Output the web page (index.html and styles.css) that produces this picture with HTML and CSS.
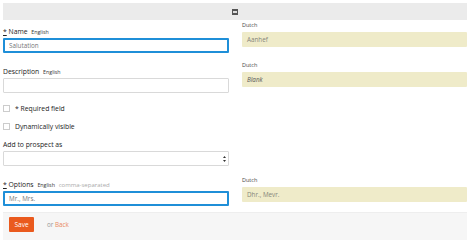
FILE: index.html
```html
<!DOCTYPE html>
<html lang="en">
<head>
    <meta charset="UTF-8">
    <title>Edit field</title>
    <link rel="stylesheet" href="styles.css">
</head>
<body>
    <div class="panel">
        <div class="panel-head">
            <span class="toggle"></span>
        </div>

        <div class="row">
            <div class="col-main">
                <label class="field-label"><span class="req">*</span> Name <span class="lang">English</span></label>
                <input type="text" class="text-input active" value="Salutation">
            </div>
            <div class="col-trans">
                <div class="trans-label">Dutch</div>
                <div class="trans-box">Aanhef</div>
            </div>
        </div>

        <div class="row">
            <div class="col-main">
                <label class="field-label">Description <span class="lang">English</span></label>
                <input type="text" class="text-input">
            </div>
            <div class="col-trans">
                <div class="trans-label">Dutch</div>
                <div class="trans-box empty">Blank</div>
            </div>
        </div>

        <div class="check first"><span class="box"></span>* Required field</div>
        <div class="check"><span class="box"></span>Dynamically visible</div>

        <div class="select-field">
            <label class="field-label">Add to prospect as</label>
            <div class="select-input">
                <svg width="3" height="6" viewBox="0 0 3 6"><path d="M1.5 0 L3 2 L0 2 Z M1.5 6 L3 4 L0 4 Z" fill="#333"/></svg>
            </div>
        </div>

        <div class="row options">
            <div class="col-main">
                <label class="field-label"><span class="req">*</span> Options <span class="lang">English</span> <span class="hint">comma-separated</span></label>
                <input type="text" class="text-input active" value="Mr., Mrs.">
            </div>
            <div class="col-trans">
                <div class="trans-label">Dutch</div>
                <div class="trans-box">Dhr., Mevr.</div>
            </div>
        </div>

        <div class="actions">
            <button class="btn-save">Save</button>
            <span class="or">or <a href="#" class="back">Back</a></span>
        </div>
    </div>
</body>
</html>
```

FILE: styles.css
```css
body {
    margin: 0;
    font-family: "Open Sans", sans-serif;
    color: #333;
    background-color: #fff;
}
.panel {
    width: 464px;
    padding: 3px 7px 0 3px;
}
.panel-head {
    height: 17px;
    background-color: #ebebeb;
    display: flex;
    align-items: center;
    justify-content: center;
}
.toggle {
    width: 6px;
    height: 6px;
    background-color: #555;
    position: relative;
}
.toggle::after {
    content: "";
    position: absolute;
    left: 1px;
    top: 2px;
    width: 4px;
    height: 2px;
    background-color: #ddd;
}
.row {
    display: flex;
    gap: 13px;
    margin-bottom: 7px;
}
.col-main {
    width: 226px;
    padding-top: 8px;
}
.col-trans {
    width: 225px;
}
.field-label {
    display: block;
    font-size: 6.8px;
    line-height: 8px;
    height: 8px;
    margin-bottom: 2px;
    color: #222;
}
.req {
    text-decoration: underline;
}
.lang {
    font-size: 5.3px;
    margin-left: 2px;
    color: #333;
}
.hint {
    font-size: 6px;
    color: #aaa;
    margin-left: 2px;
}
.text-input {
    display: block;
    box-sizing: border-box;
    width: 226px;
    height: 15px;
    padding: 0 5px;
    border: 1px solid #d9d9d9;
    border-radius: 1px;
    font-family: "Open Sans", sans-serif;
    font-size: 6.3px;
    color: #777;
    outline: none;
}
.text-input.active {
    border: 2px solid #1f8fd8;
    padding: 0 4px;
}
.trans-label {
    font-size: 5.5px;
    line-height: 10px;
    height: 10px;
    margin-bottom: 2px;
    color: #444;
}
.trans-box {
    height: 15px;
    line-height: 15px;
    background-color: #efebc9;
    padding: 0 5px;
    font-size: 6.3px;
    color: #85857a;
    border-radius: 1px;
}
.trans-box.empty {
    font-style: italic;
    color: #555;
}
.check {
    display: flex;
    align-items: center;
    font-size: 6.8px;
    height: 10px;
    margin-bottom: 8px;
    color: #222;
}
.check.first {
    margin-top: 10px;
}
.box {
    width: 5px;
    height: 5px;
    border: 1px solid #ccc;
    margin-right: 5px;
}
.select-field {
    margin-top: 10px;
    width: 226px;
}
.select-input {
    box-sizing: border-box;
    height: 15px;
    border: 1px solid #d9d9d9;
    border-radius: 1px;
    display: flex;
    align-items: center;
    justify-content: flex-end;
    padding-right: 2px;
}
.row.options {
    margin-top: 9px;
    margin-bottom: 0;
}
.row.options .col-main {
    padding-top: 6px;
}
.actions {
    margin-top: 6px;
    height: 32px;
    background-color: #f6f6f6;
    border-top: 1px solid #eee;
    display: flex;
    align-items: flex-start;
    padding-top: 4px;
    box-sizing: border-box;
    padding-left: 6px;
}
.btn-save {
    width: 25px;
    height: 15px;
    border: none;
    border-radius: 1px;
    background-color: #ea5a1e;
    color: #fff;
    font-family: "Open Sans", sans-serif;
    font-size: 6.5px;
    padding: 0;
}
.or {
    font-size: 6.3px;
    line-height: 15px;
    color: #999;
    margin-left: 13px;
}
.back {
    color: #e9895e;
    text-decoration: none;
}
```
